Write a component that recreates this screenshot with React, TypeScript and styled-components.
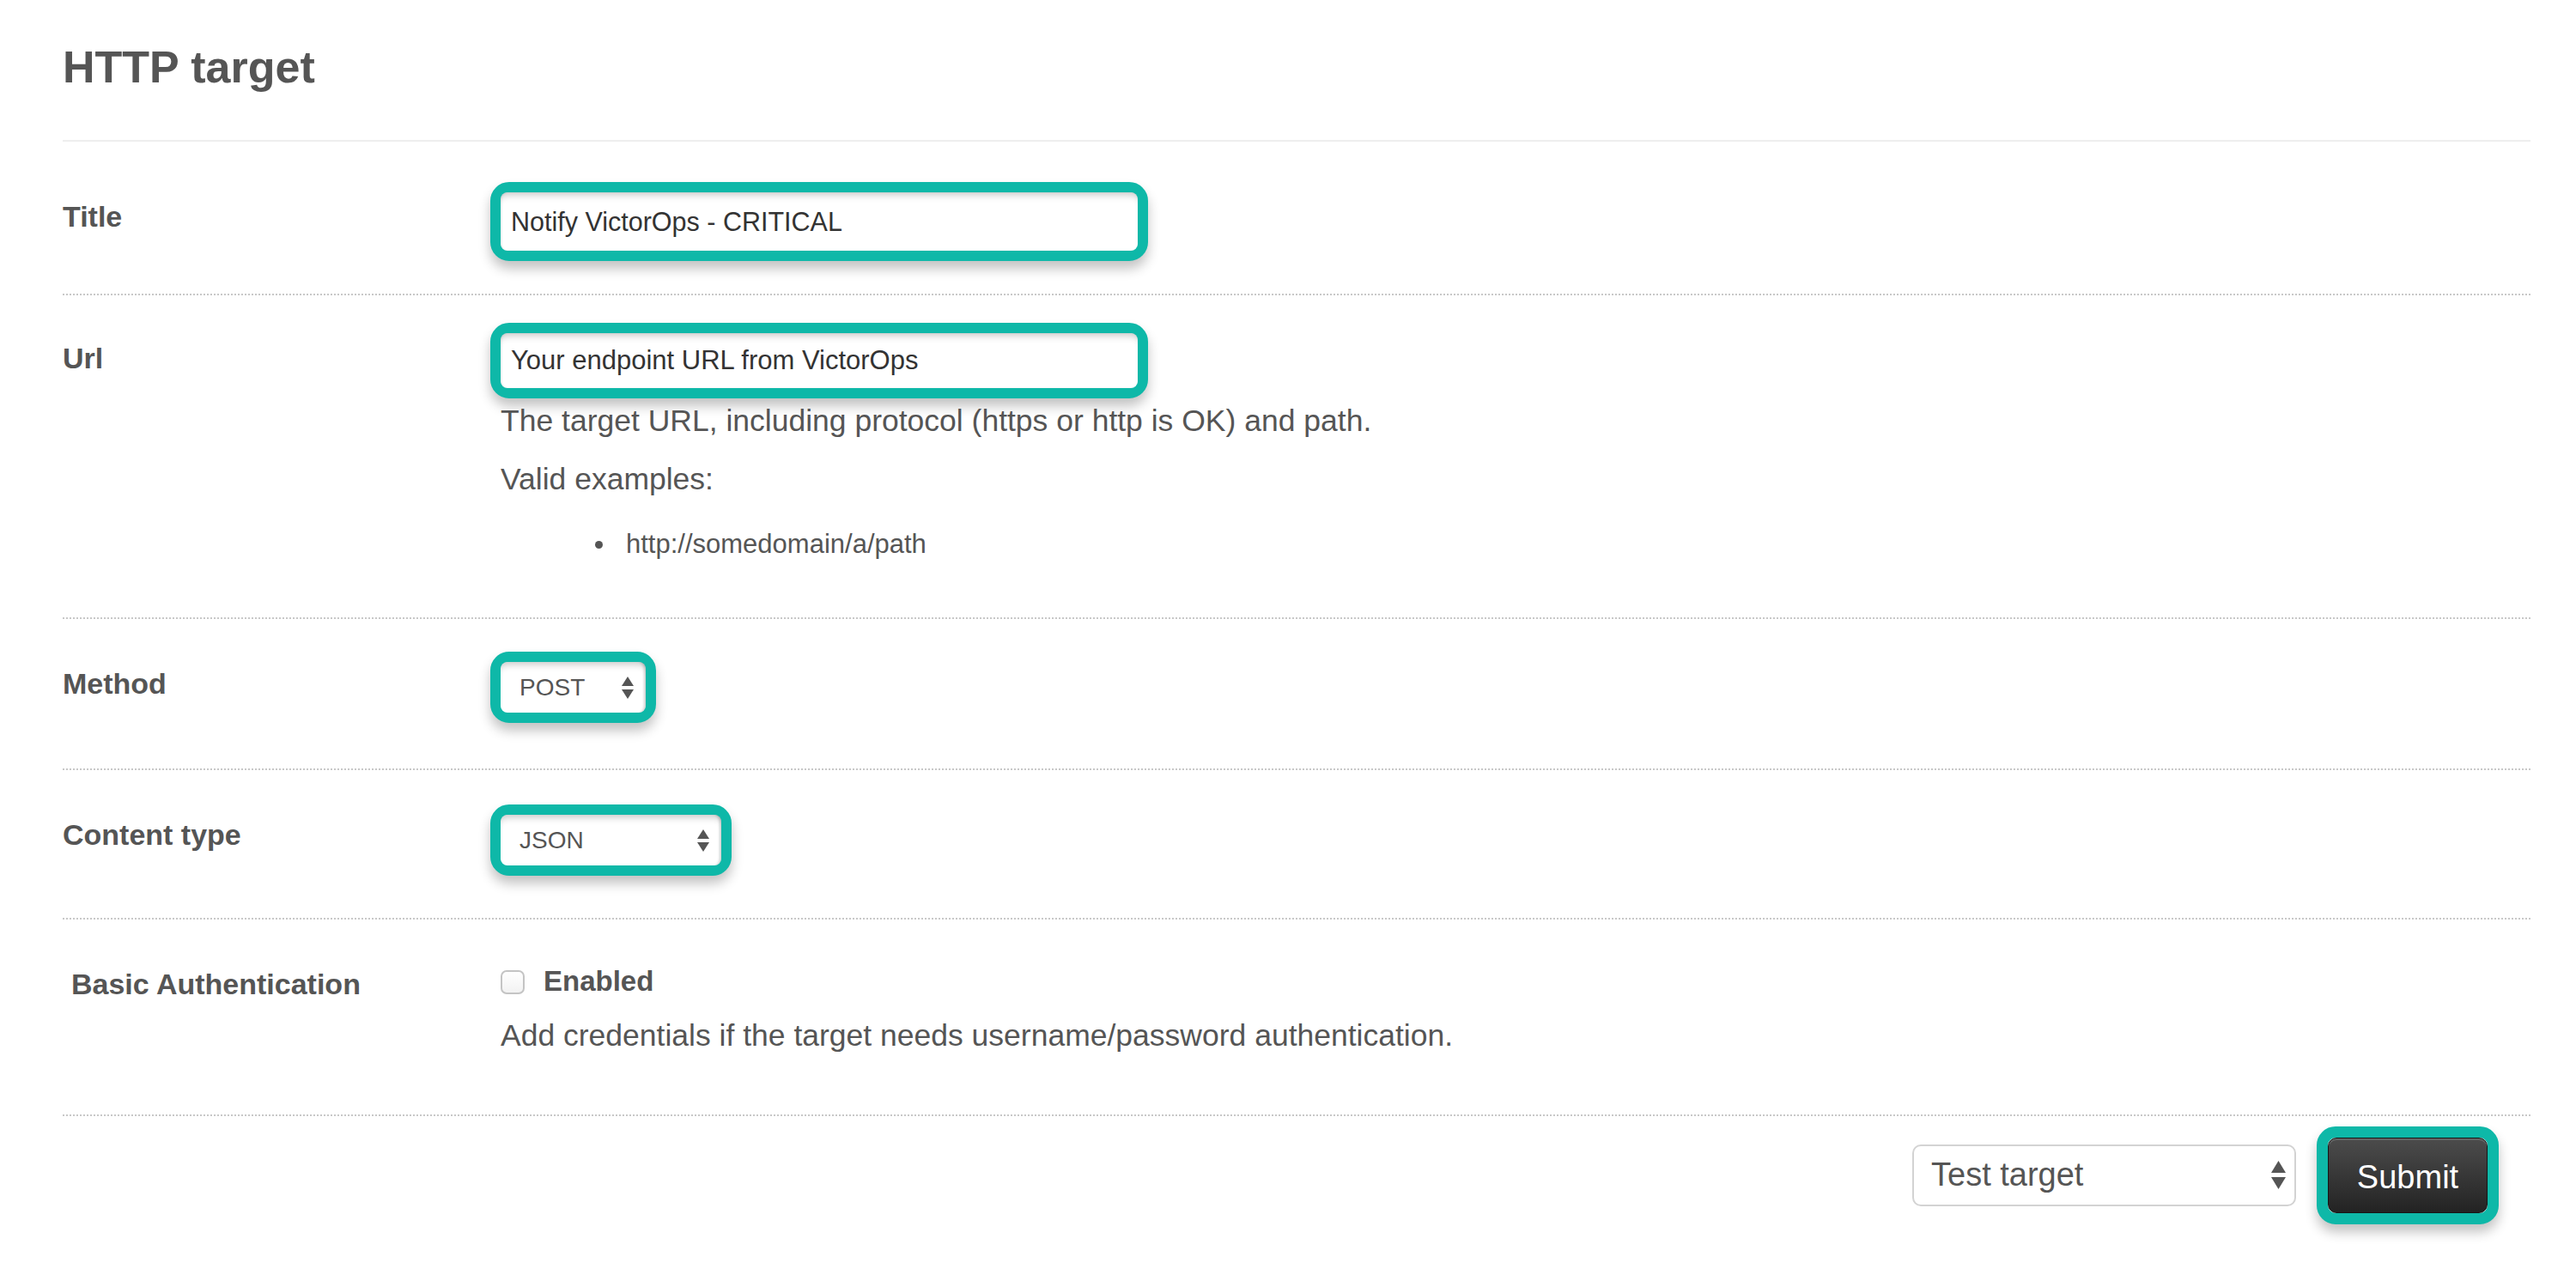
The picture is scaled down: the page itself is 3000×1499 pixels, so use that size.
import React from "react";
import styled, { createGlobalStyle } from "styled-components";

const GlobalStyle = createGlobalStyle`
  html, body { margin: 0; padding: 0; background: #fff; }
  body { font-family: "Liberation Sans", Arial, Helvetica, sans-serif; color: #555; }
  * { box-sizing: border-box; }
`;

const Page = styled.div`
  width: 3000px;
  min-height: 1499px;
  padding: 0 53px 0 73px;
`;

const Heading = styled.h1`
  margin: 0;
  padding: 47px 0 54px;
  font-size: 52px;
  line-height: 62px;
  font-weight: 700;
  color: #555;
  border-bottom: 2px solid #eee;
`;

const Row = styled.div<{ $top: number; $bottom: number }>`
  display: grid;
  grid-template-columns: 510px 1fr;
  align-items: start;
  padding: ${(p) => p.$top}px 0 ${(p) => p.$bottom}px;
  border-bottom: 2px dotted #c8c8c8;
`;

const Label = styled.div<{ $offset: number; $indent?: number }>`
  padding-top: ${(p) => p.$offset}px;
  padding-left: ${(p) => p.$indent ?? 0}px;
  font-size: 34px;
  line-height: 40px;
  font-weight: 700;
  color: #555;
`;

const Field = styled.div`
  display: flex;
  flex-direction: column;
  align-items: flex-start;
`;

const Highlight = styled.div<{ $thick?: number; $shift?: boolean }>`
  display: inline-flex;
  margin-left: ${(p) => (p.$shift === false ? 0 : -(p.$thick ?? 12))}px;
  border: ${(p) => p.$thick ?? 12}px solid #0eb8a8;
  border-radius: 22px;
  background: #fff;
  box-shadow: 0 9px 14px rgba(0, 0, 0, 0.24);
`;

const TextInput = styled.input<{ $h: number; $size: number }>`
  width: 742px;
  height: ${(p) => p.$h}px;
  border: none;
  outline: none;
  border-radius: 8px;
  padding: 0 12px;
  font-family: "Liberation Sans", Arial, sans-serif;
  font-size: ${(p) => p.$size}px;
  color: #333;
  background: #fff;
  box-shadow: inset 0 9px 9px -6px rgba(0, 0, 0, 0.22), inset 1px 0 2px rgba(0, 0, 0, 0.08);
`;

const SelectBox = styled.div<{ $w: number }>`
  width: ${(p) => p.$w}px;
  height: 59px;
  display: flex;
  align-items: center;
  justify-content: space-between;
  padding: 0 14px 0 22px;
  border-radius: 8px;
  font-size: 28px;
  color: #555;
  background: #fff;
  box-shadow: inset 0 9px 9px -6px rgba(0, 0, 0, 0.22), inset -4px 0 3px -2px rgba(0, 0, 0, 0.18);
`;

const Help = styled.div<{ $mt: number }>`
  margin-top: ${(p) => p.$mt}px;
  display: flex;
  flex-direction: column;
  gap: 22px;
  font-size: 35.5px;
  line-height: 46px;
  color: #555;
`;

const Para = styled.p`
  margin: 0;
`;

const Examples = styled.ul`
  margin: 8px 0 0;
  padding-left: 110px;
  list-style: none;
  font-size: 31px;
  line-height: 46px;
  color: #555;
`;

const Example = styled.li`
  display: flex;
  align-items: center;
  &::before {
    content: "";
    width: 9px;
    height: 9px;
    margin-right: 27px;
    border-radius: 50%;
    background: #555;
  }
`;

const CheckLine = styled.label`
  display: flex;
  align-items: center;
  gap: 22px;
  height: 40px;
  font-size: 33px;
  font-weight: 700;
  color: #555;
`;

const Checkbox = styled.input`
  appearance: none;
  width: 28px;
  height: 28px;
  margin: 2px 0 0;
  border: 2px solid #c4c4c4;
  border-radius: 7px;
  background: linear-gradient(#fff, #f2f2f2);
`;

const Footer = styled.div`
  display: flex;
  justify-content: flex-end;
  align-items: center;
  gap: 24px;
  padding: 12px 37px 0 0;
`;

const TestSelect = styled.div`
  width: 447px;
  height: 72px;
  display: flex;
  align-items: center;
  justify-content: space-between;
  padding: 0 10px 2px 20px;
  border: 2px solid #d3d3d3;
  border-radius: 10px;
  font-size: 38px;
  color: #555;
  background: #fff;
`;

const SubmitButton = styled.button`
  width: 186px;
  height: 88px;
  padding: 4px 0 0;
  border: 1px solid #161616;
  border-radius: 10px;
  background: linear-gradient(#4c4c4c, #232323);
  color: #fff;
  font-family: "Liberation Sans", Arial, sans-serif;
  font-size: 38px;
  box-shadow: inset 0 2px 0 rgba(255, 255, 255, 0.14);
  cursor: pointer;
`;

const Arrows = ({ w, h }: { w: number; h: number }) => {
  const t = Math.round(h * 0.42);
  const g = h - 2 * t;
  return (
    <svg width={w} height={h} viewBox={`0 0 ${w} ${h}`}>
      <polygon points={`${w / 2},0 ${w},${t} 0,${t}`} fill="#555" />
      <polygon points={`0,${t + g} ${w},${t + g} ${w / 2},${h}`} fill="#555" />
    </svg>
  );
};

export default function App() {
  return (
    <>
      <GlobalStyle />
      <Page>
        <Heading>HTTP target</Heading>

        <Row $top={47} $bottom={38}>
          <Label $offset={20}>Title</Label>
          <Field>
            <Highlight>
              <TextInput $h={68} $size={30.5} readOnly value="Notify VictorOps - CRITICAL" />
            </Highlight>
          </Field>
        </Row>

        <Row $top={32} $bottom={62}>
          <Label $offset={21}>Url</Label>
          <Field>
            <Highlight>
              <TextInput $h={64} $size={31} readOnly value="Your endpoint URL from VictorOps" />
            </Highlight>
            <Help $mt={3}>
              <Para>The target URL, including protocol (https or http is OK) and path.</Para>
              <Para>Valid examples:</Para>
              <Examples>
                <Example>http://somedomain/a/path</Example>
              </Examples>
            </Help>
          </Field>
        </Row>

        <Row $top={38} $bottom={53}>
          <Label $offset={17}>Method</Label>
          <Field>
            <Highlight>
              <SelectBox $w={169}>
                <span>POST</span>
                <Arrows w={14} h={26} />
              </SelectBox>
            </Highlight>
          </Field>
        </Row>

        <Row $top={40} $bottom={49}>
          <Label $offset={15}>Content type</Label>
          <Field>
            <Highlight>
              <SelectBox $w={257}>
                <span>JSON</span>
                <Arrows w={14} h={26} />
              </SelectBox>
            </Highlight>
          </Field>
        </Row>

        <Row $top={52} $bottom={69}>
          <Label $offset={3} $indent={10}>Basic Authentication</Label>
          <Field>
            <CheckLine>
              <Checkbox type="checkbox" />
              <span>Enabled</span>
            </CheckLine>
            <Help $mt={20}>
              <Para>Add credentials if the target needs username/password authentication.</Para>
            </Help>
          </Field>
        </Row>

        <Footer>
          <TestSelect>
            <span>Test target</span>
            <Arrows w={17} h={33} />
          </TestSelect>
          <Highlight $thick={13} $shift={false}>
            <SubmitButton type="button">Submit</SubmitButton>
          </Highlight>
        </Footer>
      </Page>
    </>
  );
}
